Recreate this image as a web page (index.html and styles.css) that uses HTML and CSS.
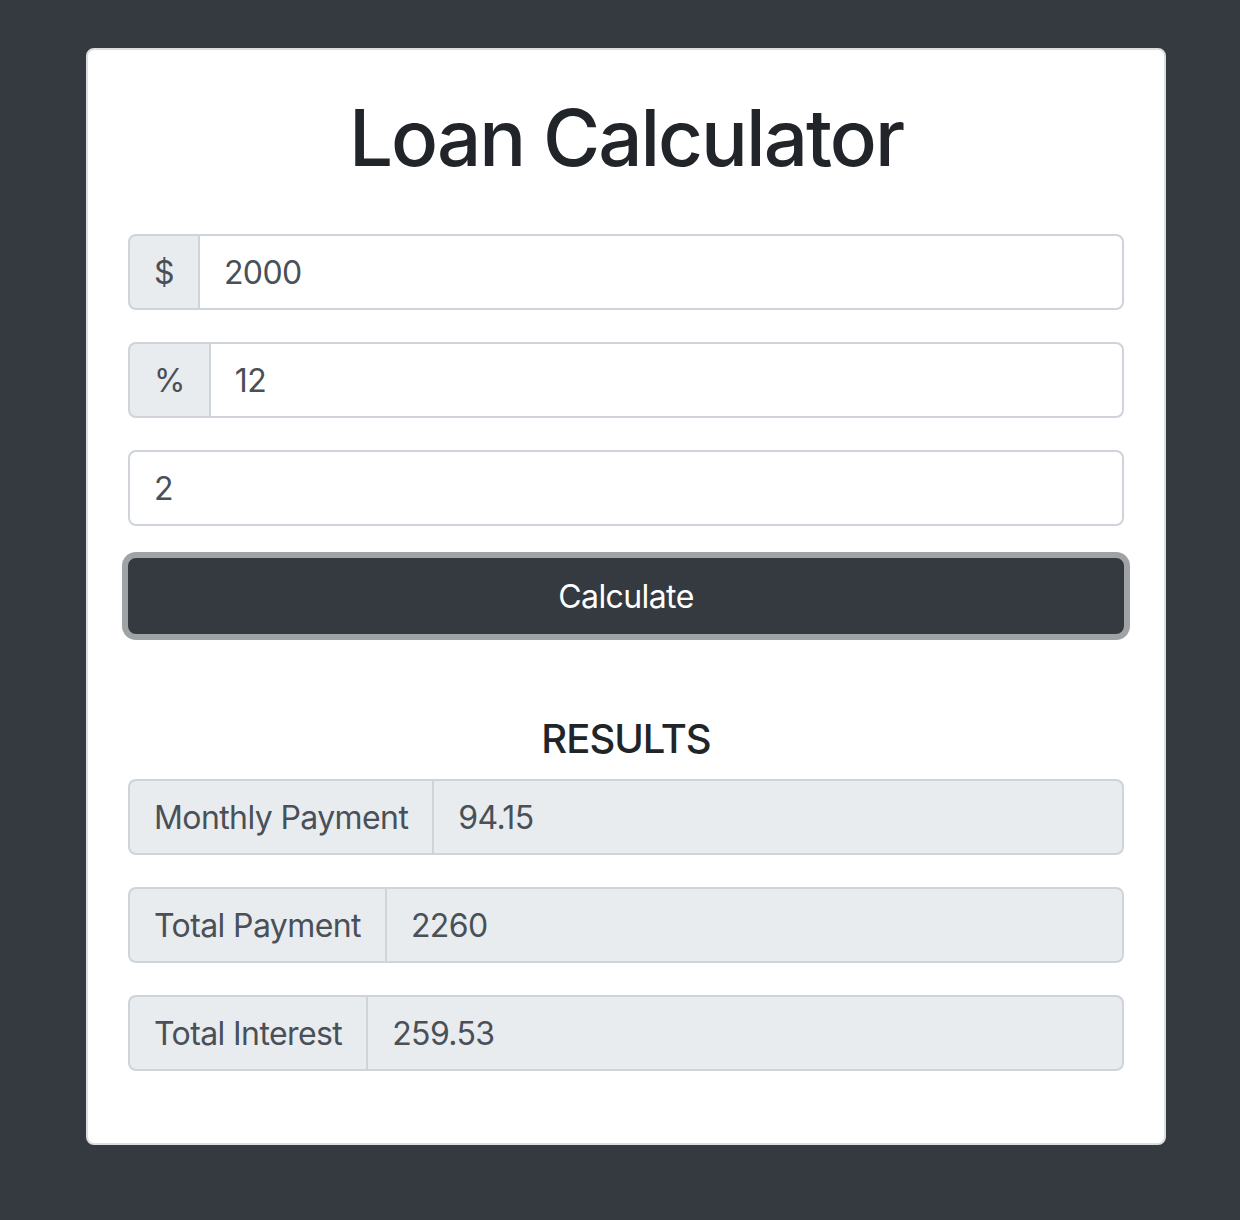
FILE: index.html
```html
<!DOCTYPE html>
<html lang="en">
<head>
<meta charset="utf-8">
<title>Loan Calculator</title>
<link rel="stylesheet" href="styles.css">
</head>
<body>
<div class="page">
  <div class="card">
    <h1 class="title">Loan Calculator</h1>
    <form class="loan-form">
      <div class="group">
        <span class="addon">$</span>
        <input class="field field-joined" type="text" value="2000">
      </div>
      <div class="group">
        <span class="addon">%</span>
        <input class="field field-joined" type="text" value="12">
      </div>
      <div class="group">
        <input class="field" type="text" value="2">
      </div>
      <button class="btn" type="button">Calculate</button>
    </form>
    <div class="results">
      <h5 class="results-title">RESULTS</h5>
      <div class="group">
        <span class="addon">Monthly Payment</span>
        <input class="field field-joined field-readonly" type="text" value="94.15" readonly>
      </div>
      <div class="group">
        <span class="addon">Total Payment</span>
        <input class="field field-joined field-readonly" type="text" value="2260" readonly>
      </div>
      <div class="group">
        <span class="addon">Total Interest</span>
        <input class="field field-joined field-readonly" type="text" value="259.53" readonly>
      </div>
    </div>
  </div>
</div>
</body>
</html>
```
FILE: styles.css
```css
html, body {
  margin: 0;
  padding: 0;
  background: #343a40;
  font-family: Inter, "Noto Sans", "Liberation Sans", sans-serif;
}
.page {
  padding: 48px 0 77px 86px;
}
.card {
  box-sizing: border-box;
  width: 1080px;
  background: #fff;
  border: 2px solid #dcdddf;
  border-radius: 8px;
  padding: 40px 40px 40px;
}
.title {
  margin: 0 0 48px;
  text-align: center;
  font-size: 78px;
  font-weight: 500;
  line-height: 96px;
  color: #212529;
  letter-spacing: -2px;
}
.group {
  display: flex;
  height: 76px;
  margin-bottom: 32px;
}
.addon {
  display: flex;
  align-items: center;
  box-sizing: border-box;
  padding: 0 24px;
  background: #e9ecef;
  border: 2px solid #ced4da;
  border-right: none;
  border-radius: 8px 0 0 8px;
  font-size: 32px;
  letter-spacing: -0.6px;
  color: #495057;
  white-space: nowrap;
}
.field {
  flex: 1;
  min-width: 0;
  box-sizing: border-box;
  height: 76px;
  margin: 0;
  padding: 0 24px;
  border: 2px solid #ced4da;
  border-radius: 8px;
  background: #fff;
  font-family: inherit;
  font-size: 32px;
  letter-spacing: -0.6px;
  color: #495057;
  outline: none;
}
.field-joined {
  border-radius: 0 8px 8px 0;
}
.field-readonly {
  background: #e9ecef;
}
.btn {
  display: block;
  width: 100%;
  height: 76px;
  margin: 0;
  padding: 0;
  border: 2px solid #343a40;
  border-radius: 8px;
  background: #343a40;
  color: #fff;
  font-family: inherit;
  font-size: 32px;
  letter-spacing: -0.6px;
  box-shadow: 0 0 0 6px rgba(82, 88, 93, 0.55);
}
.results {
  margin-top: 81px;
}
.results-title {
  margin: 0 0 16px;
  text-align: center;
  font-size: 40px;
  font-weight: 500;
  line-height: 48px;
  letter-spacing: -1px;
  color: #212529;
}
```
